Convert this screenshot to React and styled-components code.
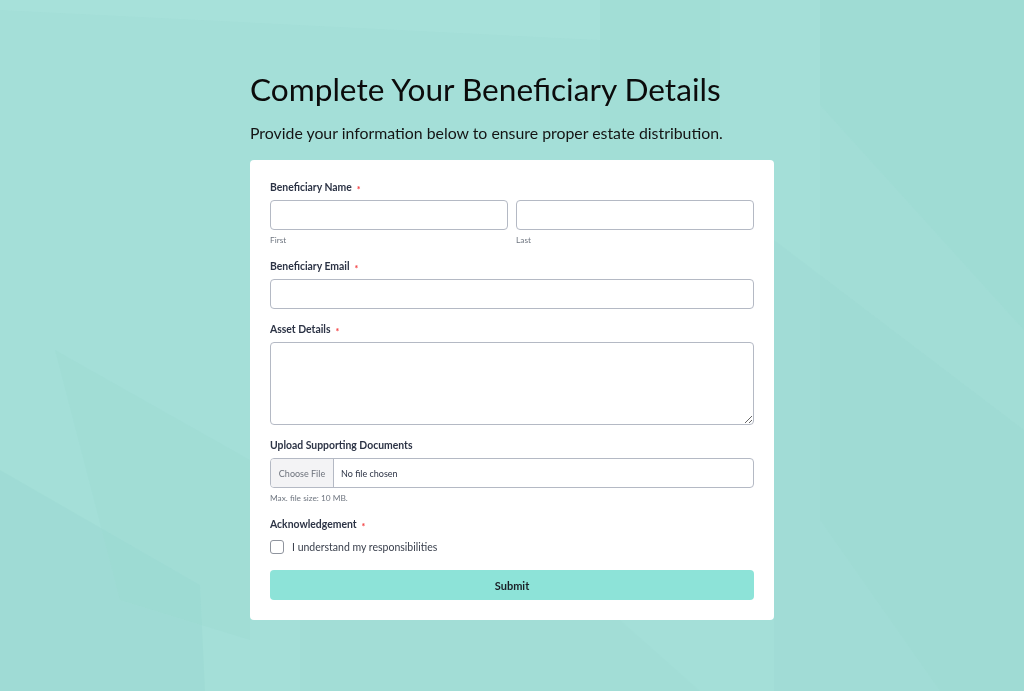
import React from "react";
import styled, { createGlobalStyle } from "styled-components";

const Global = createGlobalStyle`
  html, body { margin: 0; padding: 0; }
  body {
    background: #a4dfd8;
    font-family: Lato, "Noto Sans", sans-serif;
    min-height: 691px;
  }
  * { box-sizing: border-box; }
`;

const Backdrop = styled.svg`
  position: fixed;
  inset: 0;
  width: 100%;
  height: 100%;
  z-index: 0;
  pointer-events: none;
`;

const Page = styled.main`
  position: relative;
  z-index: 1;
  display: flex;
  justify-content: center;
  padding: 70px 0 71px;
`;

const Column = styled.div`
  width: 524px;
  display: flex;
  flex-direction: column;
`;

const Title = styled.h1`
  margin: 0;
  font-family: Lato, sans-serif;
  font-weight: 400;
  font-size: 31.6px;
  line-height: 38px;
  color: #0b0b0b;
`;

const Subtitle = styled.p`
  margin: 15px 0 18px;
  font-size: 15.85px;
  line-height: 19px;
  color: #141414;
`;

const Card = styled.form`
  background: #ffffff;
  border-radius: 4px;
  padding: 20px;
  display: flex;
  flex-direction: column;
`;

const Field = styled.div`
  display: flex;
  flex-direction: column;
  margin-bottom: ${(p) => p.$gap ?? 13}px;
`;

const Label = styled.label`
  font-size: 10.4px;
  line-height: 14px;
  font-weight: 700;
  color: #2c3345;
  margin-bottom: 6px;
`;

const Star = styled.span`
  color: #f23a3c;
  margin-left: 5px;
  font-size: 9px;
  line-height: 0;
  vertical-align: -2px;
`;

const Row = styled.div`
  display: grid;
  grid-template-columns: 1fr 1fr;
  gap: 8px;
`;

const Col = styled.div`
  display: flex;
  flex-direction: column;
`;

const Input = styled.input`
  height: 30px;
  width: 100%;
  border: 1px solid #b4b9c4;
  border-radius: 4px;
  background: #fff;
  font-family: Lato, sans-serif;
  font-size: 11px;
  padding: 0 8px;
  outline: none;
`;

const TextArea = styled.textarea`
  height: 83px;
  width: 100%;
  border: 1px solid #b4b9c4;
  border-radius: 4px;
  background: #fff;
  font-family: Lato, sans-serif;
  font-size: 11px;
  padding: 6px 8px;
  resize: vertical;
  outline: none;
  display: block;
`;

const Sub = styled.span`
  font-size: 8.3px;
  line-height: 12px;
  color: #6f7680;
  margin-top: 4px;
`;

const FileBox = styled.label`
  height: 30px;
  display: flex;
  align-items: stretch;
  border: 1px solid #b4b9c4;
  border-radius: 4px;
  overflow: hidden;
  cursor: pointer;
`;

const FileButton = styled.span`
  width: 63px;
  background: #f3f3f5;
  border-right: 1px solid #b4b9c4;
  display: flex;
  align-items: center;
  justify-content: center;
  font-size: 9px;
  color: #6d727c;
`;

const FileName = styled.span`
  display: flex;
  align-items: center;
  padding-left: 7px;
  font-size: 9px;
  color: #2c3345;
`;

const HiddenInput = styled.input`
  display: none;
`;

const CheckRow = styled.label`
  display: flex;
  align-items: center;
  gap: 8px;
  font-size: 10.5px;
  color: #3a404d;
  margin-top: 3px;
`;

const Box = styled.span`
  width: 14px;
  height: 14px;
  border: 1px solid #8f949e;
  border-radius: 3px;
  background: #fff;
  flex: none;
`;

const Submit = styled.button`
  height: 30px;
  width: 100%;
  border: none;
  border-radius: 4px;
  background: #8de3d8;
  font-family: Lato, sans-serif;
  font-weight: 700;
  font-size: 11px;
  color: #1b1f26;
  cursor: pointer;
`;

function Background() {
  return (
    <Backdrop viewBox="0 0 1024 691" preserveAspectRatio="none" aria-hidden="true">
      <polygon points="0,0 600,0 600,40 0,10" fill="#aee5df" opacity="0.35" />
      <polygon points="600,0 720,0 720,200 600,190" fill="#9fdcd4" opacity="0.4" />
      <polygon points="820,0 1024,0 1024,330 820,105" fill="#98d6cf" opacity="0.35" />
      <polygon points="820,105 1024,330 1024,691 940,691 820,520" fill="#9ad8d1" opacity="0.25" />
      <polygon points="774,240 1024,430 1024,691 774,691" fill="#96d4cd" opacity="0.18" />
      <polygon points="55,350 250,460 250,640 120,600" fill="#97d5ce" opacity="0.2" />
      <polygon points="0,470 200,585 205,691 0,691" fill="#95d4cc" opacity="0.3" />
      <polygon points="300,620 620,620 700,691 300,691" fill="#9ad7d0" opacity="0.15" />
    </Backdrop>
  );
}

export default function App() {
  return (
    <>
      <Global />
      <Background />
      <Page>
        <Column>
          <Title>Complete Your Beneficiary Details</Title>
          <Subtitle>Provide your information below to ensure proper estate distribution.</Subtitle>
          <Card onSubmit={(e) => e.preventDefault()}>
            <Field>
              <Label>
                Beneficiary Name<Star>*</Star>
              </Label>
              <Row>
                <Col>
                  <Input type="text" />
                  <Sub>First</Sub>
                </Col>
                <Col>
                  <Input type="text" />
                  <Sub>Last</Sub>
                </Col>
              </Row>
            </Field>
            <Field>
              <Label>
                Beneficiary Email<Star>*</Star>
              </Label>
              <Input type="email" />
            </Field>
            <Field>
              <Label>
                Asset Details<Star>*</Star>
              </Label>
              <TextArea />
            </Field>
            <Field>
              <Label>Upload Supporting Documents</Label>
              <FileBox>
                <HiddenInput type="file" />
                <FileButton>Choose File</FileButton>
                <FileName>No file chosen</FileName>
              </FileBox>
              <Sub>Max. file size: 10 MB.</Sub>
            </Field>
            <Field $gap={16}>
              <Label>
                Acknowledgement<Star>*</Star>
              </Label>
              <CheckRow>
                <Box />
                I understand my responsibilities
              </CheckRow>
            </Field>
            <Submit type="submit">Submit</Submit>
          </Card>
        </Column>
      </Page>
    </>
  );
}
